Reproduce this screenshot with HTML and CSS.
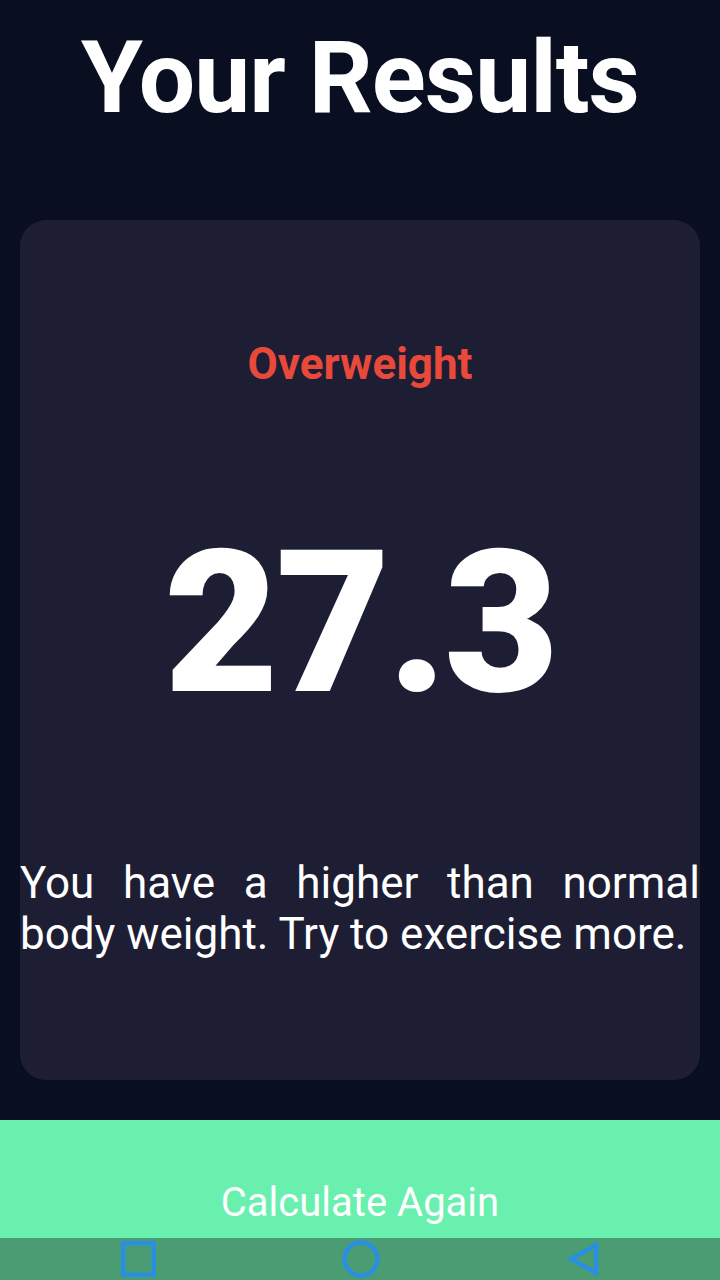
FILE: index.html
```html
<!DOCTYPE html>
<html>
<head>
<meta charset="utf-8">
<link rel="stylesheet" href="styles.css">
</head>
<body>
<div class="screen">
  <h1 class="title">Your Results</h1>
  <div class="card">
    <div class="status">Overweight</div>
    <div class="bmi">27.3</div>
    <p class="advice">You have a higher than normal body weight. Try to exercise more.</p>
  </div>
  <div class="button"><span>Calculate Again</span></div>
  <div class="navbar">
    <svg class="nav-icon" width="35" height="36" viewBox="0 0 35 36"><rect x="2.25" y="2.25" width="30.5" height="31.5" fill="none" stroke="#2a8fe3" stroke-width="4.5"/></svg>
    <svg class="nav-icon" width="38" height="38" viewBox="0 0 38 38"><ellipse cx="19" cy="19" rx="16.5" ry="16.5" fill="none" stroke="#2a8fe3" stroke-width="4.5"/></svg>
    <svg class="nav-icon" width="33" height="34" viewBox="0 0 33 34"><path d="M30 3 L30 31 L5 17 Z" fill="none" stroke="#2a8fe3" stroke-width="4.5" stroke-linejoin="miter"/></svg>
  </div>
</div>
</body>
</html>
```
FILE: styles.css
```css
* { box-sizing: border-box; }
html, body { margin: 0; padding: 0; }
body {
  background: #0a0e21;
  font-family: Roboto, "Liberation Sans", sans-serif;
  color: #ffffff;
}
.screen {
  width: 720px;
  height: 1280px;
  display: flex;
  flex-direction: column;
  overflow: hidden;
}
.title {
  margin: 0;
  height: 220px;
  padding-top: 18px;
  font-size: 100px;
  font-weight: 700;
  line-height: 120px;
  text-align: center;
  letter-spacing: -1px;
}
.card {
  margin: 0 20px;
  height: 860px;
  background: #1d1e33;
  border-radius: 26px;
  display: flex;
  flex-direction: column;
  align-items: center;
}
.status {
  margin-top: 114px;
  font-size: 44px;
  font-weight: 700;
  color: #e9493a;
  line-height: 60px;
}
.bmi {
  margin-top: 129px;
  font-size: 198px;
  font-weight: 900;
  line-height: 200px;
  letter-spacing: -3px;
}
.advice {
  margin: 135px 0 0 0;
  width: 100%;
  font-size: 44px;
  line-height: 51px;
  text-align: justify;
}
.button {
  margin-top: 40px;
  height: 118px;
  background: #6af0ae;
  display: flex;
  justify-content: center;
  align-items: flex-end;
  padding-bottom: 12px;
}
.button span {
  font-size: 40px;
  line-height: 46px;
  color: #ffffff;
}
.navbar {
  height: 42px;
  background: #4a9d72;
  display: flex;
  justify-content: center;
  align-items: center;
  gap: 186px;
}
.nav-icon { display: block; }
```
